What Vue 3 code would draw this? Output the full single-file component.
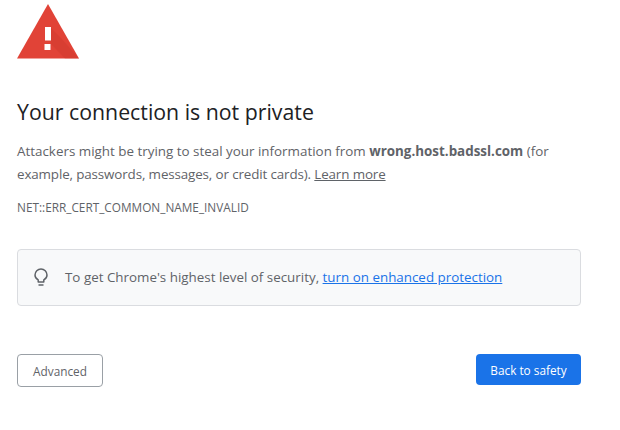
<script setup>
</script>

<template>
  <main class="page">
    <svg class="warn" width="64" height="56" viewBox="0 0 64 56" aria-hidden="true">
      <polygon points="31,0 62,54.5 0,54.5" fill="#e14337" />
      <polygon points="34,24 34,40 48,54.5 62,54.5 44,34" fill="#c9372c" opacity="0.35" />
      <rect x="28" y="23" width="6" height="13.5" fill="#fff" />
      <rect x="27.5" y="40" width="6" height="6" fill="#fff" />
    </svg>
    <h1 class="title">Your connection is not private</h1>
    <p class="desc">
      Attackers might be trying to steal your information from
      <strong>wrong.host.badssl.com</strong> (for
      <span class="tight">example, passwords, messages, or credit cards). <a class="learn">Learn more</a></span>
    </p>
    <div class="code">NET::ERR_CERT_COMMON_NAME_INVALID</div>
    <div class="tip">
      <svg class="bulb" width="14" height="18" viewBox="0 0 14 18" fill="none" aria-hidden="true">
        <path d="M4.2 11.9C2.2 10.8 1 9 1 6.9A6 6 0 0 1 13 6.9C13 9 11.8 10.8 9.8 11.9V14H4.2Z" stroke="#5f6368" stroke-width="1.5" stroke-linejoin="round" />
        <path d="M4.5 17H9.5" stroke="#5f6368" stroke-width="1.5" />
      </svg>
      <span class="tip-text">To get Chrome's highest level of security, <a class="enh">turn on enhanced protection</a></span>
    </div>
    <div class="actions">
      <button class="btn adv">Advanced</button>
      <button class="btn back">Back to safety</button>
    </div>
  </main>
</template>

<style scoped>
.page {
  width: 564px;
  padding: 4px 0 0 17px;
  font-family: "Open Sans", "Noto Sans", sans-serif;
  color: #5f6368;
}
.warn { display: block; }
.title {
  margin: 37px 0 0;
  font-size: 21.3px;
  line-height: 29px;
  font-weight: 400;
  color: #202124;
}
.desc {
  margin: 14px 0 0;
  font-size: 13.4px;
  line-height: 23px;
  width: 545px;
}
.desc strong { font-weight: 700; }
.tight { letter-spacing: -0.13px; }
.learn { color: #5f6368; text-decoration: underline; }
.code {
  margin-top: 13px;
  font-size: 11.8px;
  line-height: 16px;
  color: #5f6368;
}
.tip {
  margin-top: 34px;
  height: 57px;
  box-sizing: border-box;
  display: flex;
  align-items: center;
  gap: 17px;
  padding: 0 0 2px 16px;
  background: #f8f9fa;
  border: 1px solid #dadce0;
  border-radius: 4px;
  font-size: 13.38px;
}
.enh { color: #1a73e8; text-decoration: underline; }
.actions {
  margin-top: 48px;
  display: flex;
  justify-content: space-between;
  align-items: flex-start;
}
.btn {
  font-family: inherit;
  font-size: 11.8px;
  border-radius: 4px;
  padding: 0;
  box-sizing: border-box;
}
.adv {
  width: 86px;
  height: 33px;
  background: #fff;
  border: 1px solid #9aa0a6;
  color: #5f6368;
}
.back {
  width: 105px;
  height: 31px;
  background: #1a73e8;
  border: 0;
  color: #fff;
  font-weight: 500;
}
</style>
